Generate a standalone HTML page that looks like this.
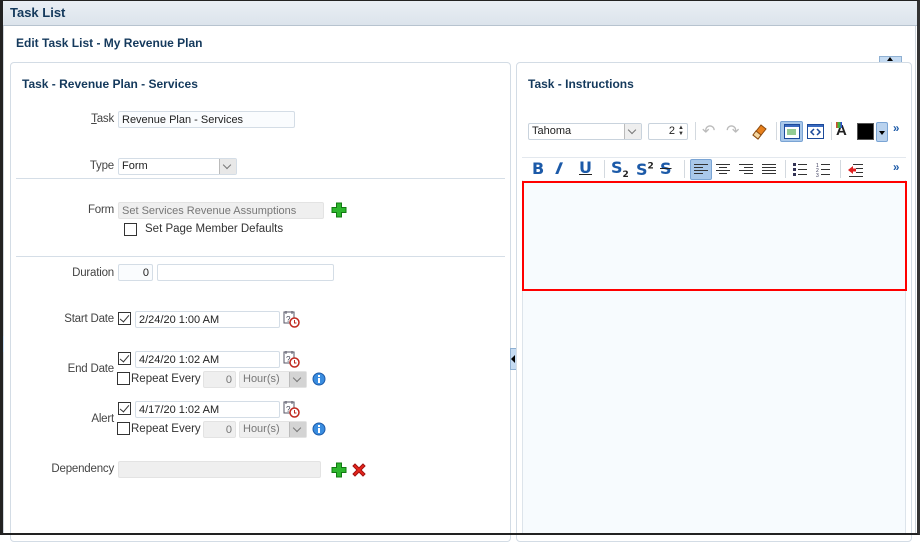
<!DOCTYPE html>
<html><head><meta charset="utf-8"><style>
*{box-sizing:border-box;margin:0;padding:0}
body{width:920px;height:535px;overflow:hidden;background:#fff;font-family:"Liberation Sans","DejaVu Sans",sans-serif;font-size:11.5px;color:#333;position:relative}
.a{position:absolute}
.t{font-weight:bold;color:#14395c;font-size:12px}
.lbl{position:absolute;text-align:right;width:110px;left:4px;color:#444;letter-spacing:-0.2px}
.in{position:absolute;border:1px solid #d4dde6;border-radius:2px;background:#fff;height:17px;padding:1px 3px;font-size:11px;line-height:14px;color:#222}
.dis{background:#efefef;border-color:#e3e3e3;color:#777}
.cb{position:absolute;width:13px;height:13px;border:1px solid #333;background:#fff}
.ck::after{content:"";position:absolute;left:3px;top:0px;width:4px;height:8px;border:solid #333;border-width:0 1.5px 1.5px 0;transform:rotate(40deg)}
.dd{position:absolute;top:0;right:0;width:17px;height:100%;border-left:1px solid #bbb;background:#e8e8e8}
.dd::after{content:"";position:absolute;left:4px;top:3px;width:5px;height:5px;border:solid #777;border-width:0 1px 1px 0;transform:rotate(45deg)}
.hr{position:absolute;height:1px;background:#d5dee7}
.tb{position:absolute;font-weight:bold;color:#1c5aa8;font-size:16px;font-family:"DejaVu Sans",sans-serif}
.sep{position:absolute;width:1px;height:18px;background:#d3d9df}
</style></head><body>
<div class="a" style="left:0;top:0;width:920px;height:535px;border:1px solid #222;border-left:3px solid #222;border-right:3px solid #333;border-bottom:2px solid #222;z-index:5;pointer-events:none"></div>
<div class="a" style="left:3px;top:1px;width:914px;height:25px;background:linear-gradient(#e9eef4,#dce4ec);border-bottom:1px solid #b7c3cf"></div>
<div class="a t" style="left:10px;top:5px;font-size:13px;color:#14395c">Task List</div>
<div class="a" style="left:3px;top:26px;width:1px;height:509px;background:#cfd6dd"></div>
<div class="a" style="left:915px;top:26px;width:1px;height:509px;background:#cfd6dd"></div>
<div class="a t" style="left:16px;top:36px">Edit Task List - My Revenue Plan</div>
<div class="a" style="left:879px;top:56px;width:23px;height:7px;background:#c5dbf2;border:1px solid #8fb0d2"></div>
<div class="a" style="left:887px;top:57px;border:3px solid transparent;border-bottom:4px solid #000;border-top:0"></div>

<div class="a" style="left:10px;top:62px;width:501px;height:480px;border:1px solid #d3dce5;border-radius:4px"></div>
<div class="a t" style="left:22px;top:77px">Task - Revenue Plan - Services</div>
<div class="lbl" style="top:113px"><u>T</u>ask</div>
<div class="in" style="left:118px;top:111px;width:177px;background:#fafcfe">Revenue Plan - Services</div>
<div class="lbl" style="top:160px">Type</div>
<div class="in" style="left:118px;top:158px;width:119px;padding-top:0">Form<span class="dd"></span></div>
<div class="hr" style="left:16px;top:178px;width:489px"></div>
<div class="lbl" style="top:204px">Form</div>
<div class="in dis" style="left:118px;top:202px;width:206px">Set Services Revenue Assumptions</div>
<svg class="a" style="left:331px;top:202px" width="16" height="16"><path d="M5.5 1h5v4.5H15v5h-4.5V15h-5v-4.5H1v-5h4.5z" fill="#2db52d" stroke="#127a12"/></svg>
<div class="cb" style="left:124px;top:223px"></div>
<div class="a" style="left:145px;top:223px">Set Page Member Defaults</div>
<div class="hr" style="left:16px;top:256px;width:489px"></div>
<div class="lbl" style="top:267px">Duration</div>
<div class="in" style="left:118px;top:264px;width:35px;text-align:right;background:#fafcfe">0</div>
<div class="in" style="left:157px;top:264px;width:177px"></div>
<div class="lbl" style="top:313px">Start Date</div>
<div class="cb ck" style="left:118px;top:312px"></div>
<div class="in" style="left:135px;top:311px;width:145px">2/24/20 1:00 AM</div>
<div class="lbl" style="top:363px">End Date</div>
<div class="cb ck" style="left:118px;top:352px"></div>
<div class="in" style="left:135px;top:351px;width:145px">4/24/20 1:02 AM</div>
<div class="cb" style="left:117px;top:372px"></div>
<div class="a" style="left:131px;top:373px">Repeat Every</div>
<div class="in dis" style="left:203px;top:371px;width:33px;text-align:right">0</div>
<div class="in dis" style="left:239px;top:371px;width:68px;padding-top:0">Hour(s)<span class="dd" style="background:#d4d4d4"></span></div>
<div class="lbl" style="top:413px">Alert</div>
<div class="cb ck" style="left:118px;top:402px"></div>
<div class="in" style="left:135px;top:401px;width:145px">4/17/20 1:02 AM</div>
<div class="cb" style="left:117px;top:422px"></div>
<div class="a" style="left:131px;top:423px">Repeat Every</div>
<div class="in dis" style="left:203px;top:421px;width:33px;text-align:right">0</div>
<div class="in dis" style="left:239px;top:421px;width:68px;padding-top:0">Hour(s)<span class="dd" style="background:#d4d4d4"></span></div>
<div class="lbl" style="top:463px">Dependency</div>
<div class="in dis" style="left:118px;top:461px;width:203px"></div>
<svg class="a" style="left:331px;top:462px" width="16" height="16"><path d="M5.5 1h5v4.5H15v5h-4.5V15h-5v-4.5H1v-5h4.5z" fill="#2db52d" stroke="#127a12"/></svg>
<svg class="a" style="left:351px;top:462px" width="16" height="16"><path d="M2 4l2-2 4 4 4-4 2 2-4 4 4 4-2 2-4-4-4 4-2-2 4-4z" fill="#e8261c" stroke="#a01010"/></svg>
<svg class="a" style="left:283px;top:310px" width="17" height="18"><rect x="1" y="2" width="10" height="11" fill="#fff" stroke="#556"/><path d="M3 1v3M9 1v3" stroke="#556"/><text x="3" y="12" font-size="8" fill="#445" font-family="Liberation Sans">?</text><circle cx="11.5" cy="12.5" r="4.5" fill="#fff" stroke="#c0281e" stroke-width="1.5"/><path d="M11.5 10v3h2" stroke="#c0281e" fill="none"/></svg>
<svg class="a" style="left:283px;top:350px" width="17" height="18"><rect x="1" y="2" width="10" height="11" fill="#fff" stroke="#556"/><path d="M3 1v3M9 1v3" stroke="#556"/><text x="3" y="12" font-size="8" fill="#445" font-family="Liberation Sans">?</text><circle cx="11.5" cy="12.5" r="4.5" fill="#fff" stroke="#c0281e" stroke-width="1.5"/><path d="M11.5 10v3h2" stroke="#c0281e" fill="none"/></svg>
<svg class="a" style="left:283px;top:400px" width="17" height="18"><rect x="1" y="2" width="10" height="11" fill="#fff" stroke="#556"/><path d="M3 1v3M9 1v3" stroke="#556"/><text x="3" y="12" font-size="8" fill="#445" font-family="Liberation Sans">?</text><circle cx="11.5" cy="12.5" r="4.5" fill="#fff" stroke="#c0281e" stroke-width="1.5"/><path d="M11.5 10v3h2" stroke="#c0281e" fill="none"/></svg>
<svg class="a" style="left:312px;top:372px" width="14" height="14"><circle cx="7" cy="7" r="6" fill="#3a8de0" stroke="#1c5aa8"/><rect x="6" y="6" width="2" height="5" fill="#fff"/><rect x="6" y="3" width="2" height="2" fill="#fff"/></svg>
<svg class="a" style="left:312px;top:422px" width="14" height="14"><circle cx="7" cy="7" r="6" fill="#3a8de0" stroke="#1c5aa8"/><rect x="6" y="6" width="2" height="5" fill="#fff"/><rect x="6" y="3" width="2" height="2" fill="#fff"/></svg>

<div class="a" style="left:510px;top:348px;width:7px;height:22px;background:#c5dbf2;border:1px solid #8fb0d2"></div>
<div class="a" style="left:511px;top:355px;border:4px solid transparent;border-right:4px solid #000;border-left:0"></div>
<div class="a" style="left:0;top:336px;width:4px;height:16px;background:#c5dbf2"></div>

<div class="a" style="left:516px;top:62px;width:396px;height:480px;border:1px solid #d3dce5;border-radius:4px"></div>
<div class="a t" style="left:528px;top:77px">Task - Instructions</div>
<div class="in" style="left:528px;top:123px;width:114px;height:17px;padding-top:0;border-color:#c9d3dd">Tahoma<span class="dd" style="background:#eee"></span></div>
<div class="in" style="left:648px;top:123px;width:40px;height:17px;text-align:right;padding-right:12px;padding-top:0;border-color:#c9d3dd">2</div>
<div class="a" style="left:678px;top:125px;font-size:6px;line-height:6px;color:#333">▲<br>▼</div>
<div class="sep" style="left:695px;top:122px"></div>
<div class="a" style="left:702px;top:121px;font-size:16px;color:#bbb">↶</div>
<div class="a" style="left:726px;top:121px;font-size:16px;color:#bbb">↷</div>
<svg class="a" style="left:750px;top:122px" width="18" height="18"><path d="M3 13l8-10 5 4-8 10z" fill="#e8801c" stroke="#8a4a10"/><path d="M3 13l3-4 5 4-3 4z" fill="#f4d6a0" stroke="#8a4a10"/></svg>
<div class="sep" style="left:776px;top:122px"></div>
<div class="a" style="left:780px;top:121px;width:23px;height:21px;background:#a9c8ea;border:1px solid #7aa4d4;border-radius:2px"></div>
<svg class="a" style="left:784px;top:124px" width="16" height="15"><rect x="0.5" y="0.5" width="15" height="14" fill="#fff" stroke="#1c4a9a"/><rect x="1" y="1" width="14" height="2" fill="#3a6ac0"/><path d="M3 6h9M3 8h9M3 10h9" stroke="#2a9a2a"/></svg>
<svg class="a" style="left:807px;top:124px" width="17" height="15"><rect x="0.5" y="0.5" width="16" height="14" fill="#fff" stroke="#1c4a9a"/><rect x="1" y="1" width="15" height="2" fill="#3a6ac0"/><path d="M7 5l-3 3 3 3M10 5l3 3-3 3" stroke="#1c4a9a" fill="none" stroke-width="1.5"/></svg>
<div class="sep" style="left:831px;top:122px"></div>
<div class="a" style="left:836px;top:122px;font-weight:bold;font-size:15px;color:#222">A</div>
<div class="a" style="left:836px;top:122px;width:6px;height:6px;background:linear-gradient(90deg,#e33,#3c3,#33e)"></div>
<div class="a" style="left:857px;top:123px;width:17px;height:17px;background:#000;border:1px solid #555"></div>
<div class="a" style="left:876px;top:122px;width:12px;height:20px;background:#b9d2ee;border:1px solid #7aa4d4;border-radius:2px"></div>
<div class="a" style="left:879px;top:131px;border:3px solid transparent;border-top:4px solid #000;border-bottom:0"></div>
<div class="a" style="left:893px;top:123px;color:#1c5aa8;font-weight:bold">»</div>
<div class="hr" style="left:522px;top:157px;width:384px;background:#e3e8ee"></div>
<div class="tb" style="left:532px;top:159px">B</div>
<div class="tb" style="left:556px;top:159px;font-style:italic;transform:skewX(-12deg)">I</div>
<div class="tb" style="left:579px;top:158px;text-decoration:underline;text-decoration-color:#222">U</div>
<div class="sep" style="left:604px;top:160px"></div>
<div class="tb" style="left:611px;top:158px">S<sub style="font-size:9px;color:#222">2</sub></div>
<div class="tb" style="left:636px;top:160px">S<sup style="font-size:9px;color:#222">2</sup></div>
<div class="tb" style="left:660px;top:159px;text-decoration:line-through;text-decoration-color:#222">S</div>
<div class="sep" style="left:684px;top:160px"></div>
<div class="a" style="left:690px;top:159px;width:22px;height:21px;background:#a9c8ea;border:1px solid #7aa4d4;border-radius:2px"></div>
<svg class="a" style="left:692px;top:163px" width="90" height="14"><g stroke="#333"><path d="M2 1.5h14M2 4.5h9M2 7.5h14M2 10.5h9"/><path d="M24 1.5h14M27 4.5h8M24 7.5h14M27 10.5h8"/><path d="M47 1.5h14M52 4.5h9M47 7.5h14M52 10.5h9"/><path d="M70 1.5h14M70 4.5h14M70 7.5h14M70 10.5h14"/></g></svg>
<div class="sep" style="left:785px;top:160px"></div>
<svg class="a" style="left:792px;top:162px" width="45" height="16"><g fill="#335"><rect x="1" y="1" width="3" height="3"/><rect x="1" y="6" width="3" height="3"/><rect x="1" y="11" width="3" height="3"/></g><path d="M6 2.5h9M6 7.5h9M6 12.5h9" stroke="#333"/><text x="24" y="5" font-size="5" fill="#335">1</text><text x="24" y="10" font-size="5" fill="#335">2</text><text x="24" y="15" font-size="5" fill="#335">3</text><path d="M29 2.5h9M29 7.5h9M29 12.5h9" stroke="#333"/></svg>
<div class="sep" style="left:840px;top:160px"></div>
<svg class="a" style="left:847px;top:162px" width="18" height="16"><path d="M6 2.5h10M9 6.5h7M9 10.5h7M2 14.5h14" stroke="#333"/><path d="M1 8l5-4v2.5h3v3H6V12z" fill="#e02020"/></svg>
<div class="a" style="left:893px;top:162px;color:#1c5aa8;font-weight:bold">»</div>
<div class="a" style="left:522px;top:180px;width:384px;height:355px;background:#f7fbfe;border-left:1px solid #dde4eb;border-right:1px solid #dde4eb"></div>
<div class="a" style="left:522px;top:181px;width:385px;height:110px;border:2px solid #f00"></div>
</body></html>
